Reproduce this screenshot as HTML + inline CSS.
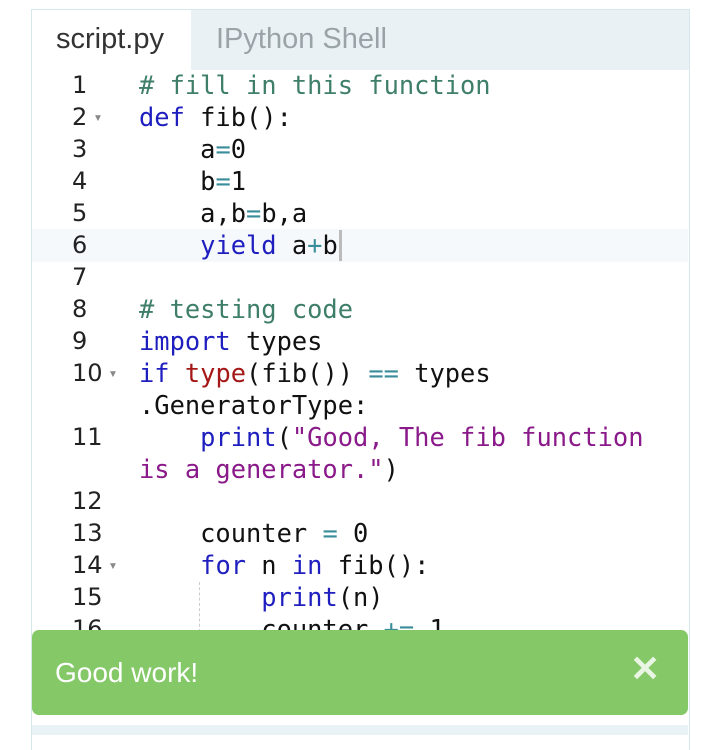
<!DOCTYPE html>
<html><head><style>
body{margin:0;width:720px;height:735px;background:#fff;position:relative;overflow:hidden;font-family:"Liberation Sans",sans-serif}
.box{position:absolute;left:31px;top:9px;width:657px;height:740px;border:1.5px solid #d6e7ee;border-bottom:none}
.tabbar{position:absolute;left:0;top:0;width:657px;height:60px;background:#fff}
.t2{position:absolute;left:159px;top:0;width:498px;height:60px;background:#e9f1f4}
.tab{position:absolute;top:13px;font-size:29px;color:#333}
.hl{position:absolute;left:32px;top:229px;width:656px;height:33px;background:#f5f9fb}
.ln{position:absolute;left:72px;font-family:"DejaVu Sans","Liberation Sans",sans-serif;font-size:24px;color:#222}
.fold{position:absolute;left:93px;font-size:10px;color:#888}
.code{position:absolute;left:139px;font-family:"DejaVu Sans Mono","Liberation Mono",monospace;font-size:25.4px;white-space:pre;color:#111}
.c{color:#3f7f6a}.k{color:#1f1fc0}.o{color:#3a8c9a}.r{color:#a51818}.s{color:#8a198a}
.toast{position:absolute;left:32px;top:630px;width:656px;height:85px;background:#84c868;border-radius:7px}
.toast .t{position:absolute;left:23px;top:27px;color:#fff;font-size:28px}
.toast .x{position:absolute;left:598px;top:18px;color:#eaf6e4;font-size:36px;font-weight:bold}
.bot{position:absolute;left:32px;top:725px;width:656px;height:10px;background:#e9f2f4}
.guide{position:absolute;left:199px;top:582px;height:50px;border-left:1px dashed #ccc}
.cur{position:absolute;left:339px;top:230px;width:3px;height:31px;background:#bbb}
</style></head><body>
<div class="hl"></div>
<div class="box"><div class="tabbar"></div><div class="t2"></div>
<div class="tab" style="left:24px">script.py</div>
<div class="tab" style="left:184px;color:#9aa4a8">IPython Shell</div></div>
<div class="guide"></div>
<div class="cur"></div>
<div class="ln" style="top:71px">1</div>
<div class="ln" style="top:103px">2</div><div class="fold" style="top:113px">▼</div>
<div class="ln" style="top:135px">3</div>
<div class="ln" style="top:167px">4</div>
<div class="ln" style="top:199px">5</div>
<div class="ln" style="top:231px">6</div>
<div class="ln" style="top:263px">7</div>
<div class="ln" style="top:295px">8</div>
<div class="ln" style="top:327px">9</div>
<div class="ln" style="top:359px">10</div><div class="fold" style="top:369px;left:108px">▼</div>
<div class="ln" style="top:423px">11</div>
<div class="ln" style="top:487px">12</div>
<div class="ln" style="top:519px">13</div>
<div class="ln" style="top:551px">14</div><div class="fold" style="top:561px;left:108px">▼</div>
<div class="ln" style="top:583px">15</div>
<div class="ln" style="top:615px">16</div>
<div class="code" style="top:70px"><span class="c"># fill in this function</span></div>
<div class="code" style="top:102px"><span class="k">def</span> fib():</div>
<div class="code" style="top:134px">    a<span class="o">=</span>0</div>
<div class="code" style="top:166px">    b<span class="o">=</span>1</div>
<div class="code" style="top:198px">    a,b<span class="o">=</span>b,a</div>
<div class="code" style="top:230px">    <span class="k">yield</span> a<span class="o">+</span>b</div>
<div class="code" style="top:294px"><span class="c"># testing code</span></div>
<div class="code" style="top:326px"><span class="k">import</span> types</div>
<div class="code" style="top:358px"><span class="k">if</span> <span class="r">type</span>(fib()) <span class="o">==</span> types</div>
<div class="code" style="top:390px">.GeneratorType:</div>
<div class="code" style="top:422px">    <span class="k">print</span>(<span class="s">"Good, The fib function</span></div>
<div class="code" style="top:454px"><span class="s">is a generator."</span>)</div>
<div class="code" style="top:518px">    counter <span class="o">=</span> 0</div>
<div class="code" style="top:550px">    <span class="k">for</span> n <span class="k">in</span> fib():</div>
<div class="code" style="top:582px">        <span class="k">print</span>(n)</div>
<div class="code" style="top:614px">        counter <span class="o">+=</span> 1</div>
<div class="toast"><div class="t">Good work!</div><div class="x">✕</div></div>
<div class="bot"></div>
</body></html>
